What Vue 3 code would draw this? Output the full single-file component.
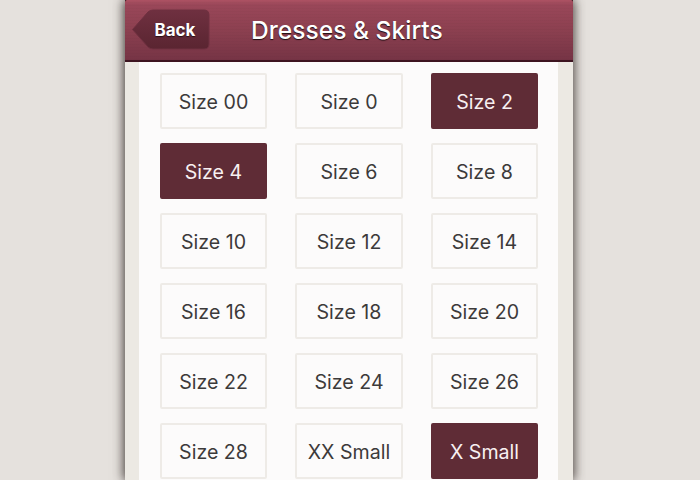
<template>
  <div class="page">
    <div class="phone">
      <header class="nav">
        <button class="back">
          <svg class="back-shape" width="78" height="42" viewBox="0 0 78 42">
            <defs>
              <linearGradient id="backFill" x1="0" y1="0" x2="0" y2="1">
                <stop offset="0" stop-color="#6f3040" />
                <stop offset="1" stop-color="#5a2531" />
              </linearGradient>
            </defs>
            <path
              d="M0.5 20.5 L16 3 Q18 1 21 1 L72 1 Q77 1 77 6 L77 35 Q77 40 72 40 L21 40 Q18 40 16 38 Z"
              fill="url(#backFill)"
              stroke="#6f3040"
            />
          </svg>
          <span>Back</span>
        </button>
        <h1>Dresses &amp; Skirts</h1>
      </header>
      <main class="strip">
        <div class="sheet">
          <div class="sizes">
            <div
              v-for="size in sizes"
              :key="size.label"
              class="size"
              :class="{ active: size.active }"
            >
              <span>{{ size.label }}</span>
            </div>
          </div>
        </div>
      </main>
    </div>
  </div>
</template>

<script setup>
const sizes = [
  { label: 'Size 00' },
  { label: 'Size 0' },
  { label: 'Size 2', active: true },
  { label: 'Size 4', active: true },
  { label: 'Size 6' },
  { label: 'Size 8' },
  { label: 'Size 10' },
  { label: 'Size 12' },
  { label: 'Size 14' },
  { label: 'Size 16' },
  { label: 'Size 18' },
  { label: 'Size 20' },
  { label: 'Size 22' },
  { label: 'Size 24' },
  { label: 'Size 26' },
  { label: 'Size 28' },
  { label: 'XX Small' },
  { label: 'X Small', active: true }
]
</script>

<style scoped>
.page {
  height: 480px;
  padding-left: 125px;
  overflow: hidden;
  background: #e5e1dd;
  font-family: Inter, Lato, sans-serif;
}

.phone {
  width: 448px;
  height: 480px;
  background: #1c1214;
  box-shadow: -2px 0 10px rgba(50, 42, 38, 0.65), 2px 0 10px rgba(50, 42, 38, 0.55);
}

.nav {
  display: flex;
  align-items: center;
  height: 60px;
  padding-left: 7px;
  border-radius: 2px 2px 0 0;
  background:
    repeating-linear-gradient(0deg, rgba(0, 0, 0, 0.02) 0 1px, transparent 1px 3px),
    linear-gradient(#ad5263 0, #9a4759 8%, #8c4050 50%, #763445 100%);
  border-bottom: 2px solid #3d1420;
}

.back {
  position: relative;
  width: 78px;
  height: 42px;
  padding: 0 0 0 8px;
  border: none;
  background: none;
  color: #fff;
  font: 700 17px Inter, Lato, sans-serif;
  text-shadow: 0 1px 1px rgba(0, 0, 0, 0.6);
}

.back-shape {
  position: absolute;
  left: 0;
  top: 0;
}

.back span {
  position: relative;
}

h1 {
  margin: 0 0 0 41px;
  color: #fff;
  font: 500 24.6px Inter, Lato, sans-serif;
  text-shadow: 0 1px 1px rgba(0, 0, 0, 0.8);
}

.strip {
  height: 418px;
  padding: 0 15px 0 14px;
  background: #ece9e3;
}

.sheet {
  height: 100%;
  padding: 11px 20px 0 21px;
  background: #fcfbfb;
}

.sizes {
  display: grid;
  grid-template-columns: 107px 108px 107px;
  grid-auto-rows: 56px;
  gap: 14px 28px;
}

.size {
  display: flex;
  align-items: center;
  justify-content: center;
  border: 2px solid #eeebe7;
  border-radius: 2px;
  color: #3c3a3a;
  font-size: 19.6px;
  font-weight: 380;
}

.size span {
  margin-top: 2px;
}

.size.active {
  border-color: #5f2c36;
  background: #5f2c36;
  color: #f8f0f1;
}
</style>

<style>
html,
body {
  margin: 0;
  background: #e5e1dd;
}
</style>
